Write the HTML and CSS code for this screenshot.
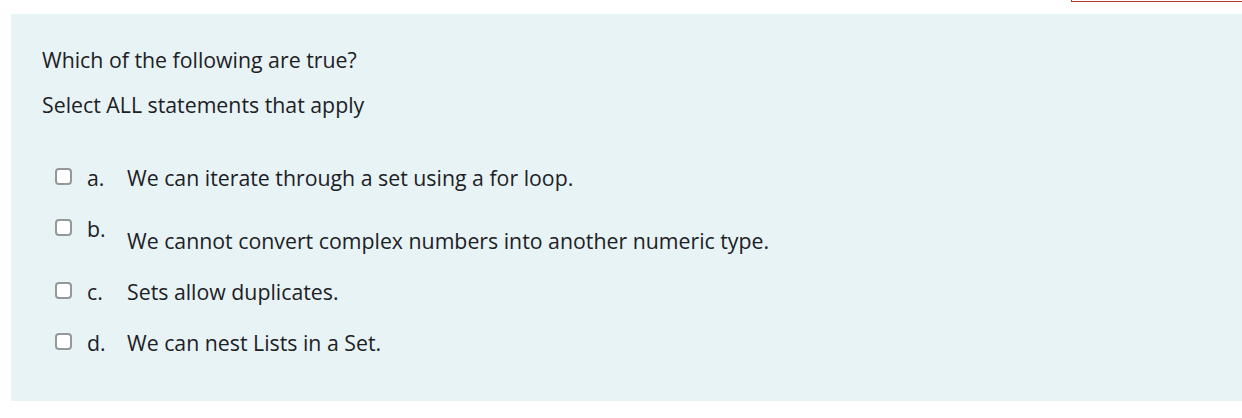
FILE: index.html
```html
<!DOCTYPE html>
<html>
<head>
<meta charset="utf-8">
<link rel="stylesheet" href="styles.css">
</head>
<body>
<div class="topbox"></div>
<div class="panel">
  <div class="qtext">
    <p class="q">Which of the following are true?</p>
    <p class="q">Select ALL statements that apply</p>
  </div>
  <div class="answers">
    <div class="opt">
      <span class="box"></span>
      <span class="lbl">a.</span>
      <span class="txt">We can iterate through a set using a for loop.</span>
    </div>
    <div class="opt tall">
      <span class="box"></span>
      <span class="lbl">b.</span>
      <span class="txt low">We cannot convert complex numbers into another numeric type.</span>
    </div>
    <div class="opt">
      <span class="box"></span>
      <span class="lbl">c.</span>
      <span class="txt">Sets allow duplicates.</span>
    </div>
    <div class="opt">
      <span class="box"></span>
      <span class="lbl">d.</span>
      <span class="txt">We can nest Lists in a Set.</span>
    </div>
  </div>
</div>
</body>
</html>
```
FILE: styles.css
```css
html, body {
  margin: 0;
  padding: 0;
  background: #ffffff;
}
body {
  position: relative;
  height: 418px;
  overflow: hidden;
  font-family: "Open Sans", "Noto Sans", sans-serif;
  color: #1d2125;
}
.topbox {
  position: absolute;
  left: 1071px;
  top: -9px;
  width: 200px;
  height: 10px;
  border-left: 1px solid #b03a2e;
  border-bottom: 1px solid #b03a2e;
}
.panel {
  margin: 14px 0 0 11px;
  height: 387px;
  background: #e7f3f5;
  padding: 0 0 0 31px;
  box-sizing: border-box;
}
.qtext {
  padding-top: 31px;
}
.q {
  margin: 0 0 15px 0;
  font-size: 21.3px;
  line-height: 30px;
}
.answers {
  padding-top: 28px;
  padding-left: 13px;
}
.opt {
  display: flex;
  align-items: flex-start;
  height: 51px;
  font-size: 21.3px;
  line-height: 30px;
}
.opt.tall {
  height: 63px;
}
.box {
  width: 13px;
  height: 13px;
  border: 2px solid #959899;
  border-radius: 4px;
  background: #fff;
  margin-top: 5px;
  flex: none;
}
.lbl {
  width: 40px;
  margin-left: 15px;
  flex: none;
}
.txt.low {
  margin-top: 12px;
}
```
